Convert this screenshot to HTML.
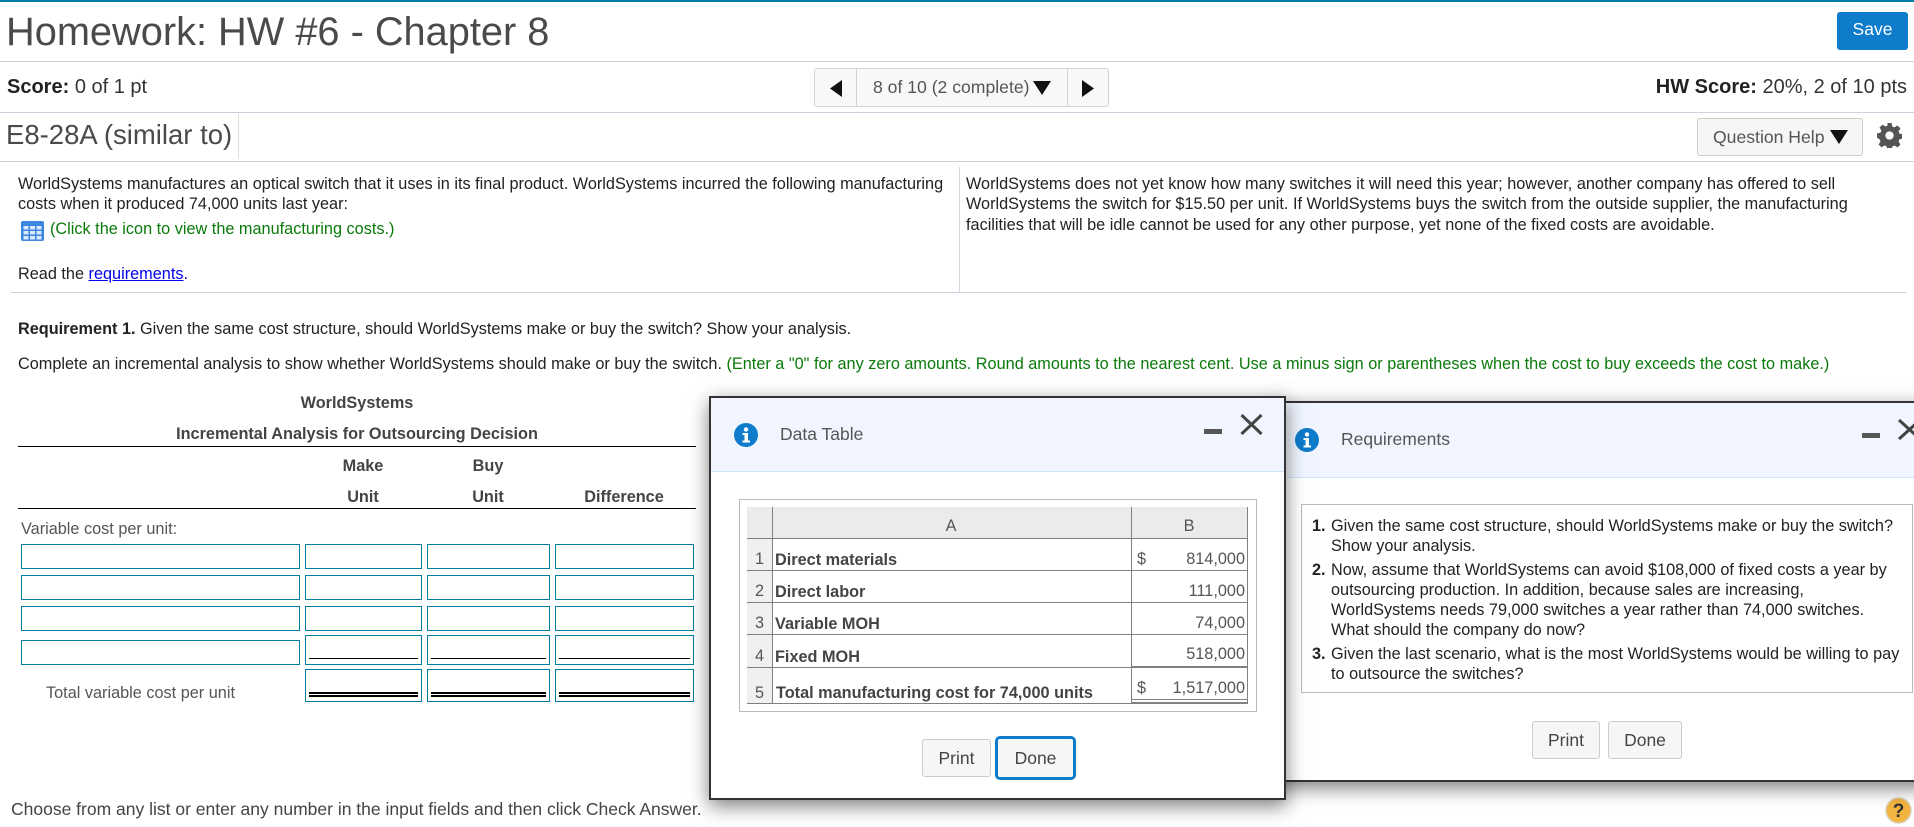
<!DOCTYPE html>
<html lang="en"><head><meta charset="utf-8"><title>Homework: HW #6 - Chapter 8</title>
<style>
html,body{margin:0;padding:0;background:#fff}
body{width:1914px;height:827px;overflow:hidden;position:relative;font-family:"Liberation Sans",Arial,sans-serif;color:#222}
.a{position:absolute;white-space:nowrap}
.t{position:absolute;white-space:nowrap;font-size:16.27px;line-height:20px;height:20px}
.c{transform:translateX(-50%)}
.hl{position:absolute;height:1px;background:#ccd0dc}
.in{position:absolute;box-sizing:border-box;border:1px solid #007fa3;background:#fff}
.ul{position:absolute;left:3px;right:3px;height:1px;background:#000}
.th{font-weight:bold;color:#444}
.btn{position:absolute;box-sizing:border-box;border:1px solid #ccc;border-radius:3px;background:#f6f6f6;color:#444;text-align:center;font-size:17.5px}
.dlg{position:absolute;box-sizing:border-box;border:2px solid #333;background:#fff;box-shadow:0 6px 18px rgba(0,0,0,.5)}
.g{position:absolute;background:#808080}
.num{color:#555}
.bd{font-weight:bold;color:#444}
</style></head><body>
<div class="a" style="left:0;top:0;width:1914px;height:2px;background:#007fa3"></div>
<div class="a" style="left:6px;top:9px;font-size:39.75px;line-height:46px;color:#4a4a4a">Homework: HW #6 - Chapter 8</div>
<div class="btn" style="left:1837px;top:12px;width:71px;height:38px;background:#0f7bcb;border-color:#0f7bcb;color:#fff;line-height:33px">Save</div>
<div class="hl" style="left:0;top:61px;width:1914px"></div>
<div class="a" style="left:7px;top:76px;font-size:20px;line-height:22px;color:#222"><b>Score:</b> <span style="color:#333">0 of 1 pt</span></div>
<div class="a" style="left:814px;top:68px;width:295px;height:39px;box-sizing:border-box;border:1px solid #d4d4d4;border-radius:3px;background:#f8f8f8"></div>
<div class="a" style="left:856px;top:68px;width:1px;height:39px;background:#d4d4d4"></div>
<div class="a" style="left:1067px;top:68px;width:1px;height:39px;background:#d4d4d4"></div>
<svg class="a" style="left:830px;top:80px" width="12" height="17"><path d="M12 0V17L0 8.500Z" fill="#111"/></svg>
<svg class="a" style="left:1081px;top:80px" width="13" height="17"><path d="M1 0V17L13 8.500Z" fill="#111"/></svg>
<div class="a" style="left:873px;top:76px;font-size:17.6px;line-height:22px;color:#555">8 of 10 (2 complete)</div>
<svg class="a" style="left:1033px;top:81px" width="18" height="14"><path d="M0 0H18L9 14Z" fill="#111"/></svg>
<div class="a" style="right:7px;top:76px;font-size:20px;line-height:22px;color:#222"><b>HW Score:</b> <span style="color:#333">20%, 2 of 10 pts</span></div>
<div class="hl" style="left:0;top:112px;width:1914px"></div>
<div class="a" style="left:6px;top:118px;font-size:27.5px;line-height:34px;color:#4a4a4a">E8-28A (similar to)</div>
<div class="a" style="left:238px;top:114px;width:1px;height:45px;background:#ddd"></div>
<div class="btn" style="left:1697px;top:118px;width:166px;height:38px;line-height:36px;text-align:left;padding-left:15px;font-size:17.6px;color:#555">Question Help</div>
<svg class="a" style="left:1830px;top:130px" width="18" height="14"><path d="M0 0H18L9 14Z" fill="#111"/></svg>
<svg class="a" style="left:1877px;top:123px" width="25" height="25" viewBox="0 0 24 24"><path fill="#555" fill-rule="evenodd" d="M10 0h4l.7 3.300 2.100.9 2.900-1.800 2.800 2.800-1.800 2.900.9 2.100 3.400.7v4l-3.400.7-.9 2.100 1.800 2.900-2.800 2.800-2.900-1.800-2.100.9-.7 3.400h-4l-.7-3.400-2.100-.9-2.900 1.800-2.800-2.800 1.800-2.900-.9-2.100L0 14v-4l3.300-.7.9-2.100-1.800-2.900 2.800-2.800 2.900 1.800 2.100-.9zM12 8a4 4 0 1 0 0 8 4 4 0 0 0 0-8z"/></svg>
<div class="hl" style="left:0;top:161px;width:1914px"></div>

<div class="t" style="left:18px;top:174px">WorldSystems manufactures an optical switch that it uses in its final product. WorldSystems incurred the following manufacturing</div>
<div class="t" style="left:18px;top:194px">costs when it produced 74,000 units last year:</div>
<svg class="a" style="left:21px;top:221px" width="23" height="20"><rect width="23" height="20" rx="2" fill="#3a86e0"/><g fill="#dbe9fb"><rect x="2.500" y="5" width="5" height="3.500"/><rect x="9" y="5" width="5" height="3.500"/><rect x="15.500" y="5" width="5" height="3.500"/><rect x="2.500" y="10" width="5" height="3.500"/><rect x="9" y="10" width="5" height="3.500"/><rect x="15.500" y="10" width="5" height="3.500"/><rect x="2.500" y="15" width="5" height="3.500"/><rect x="9" y="15" width="5" height="3.500"/><rect x="15.500" y="15" width="5" height="3.500"/></g></svg>
<div class="t" style="left:50px;top:219px;color:#0a7a0a">(Click the icon to view the manufacturing costs.)</div>
<div class="t" style="left:18px;top:264px">Read the <span style="color:#00e;text-decoration:underline">requirements</span><span style="color:#00e">.</span></div>
<div class="a" style="left:959px;top:167px;width:1px;height:125px;background:#d5d8e0"></div>
<div class="t" style="left:966px;top:174px">WorldSystems does not yet know how many switches it will need this year; however, another company has offered to sell</div>
<div class="t" style="left:966px;top:194px">WorldSystems the switch for $15.50 per unit. If WorldSystems buys the switch from the outside supplier, the manufacturing</div>
<div class="t" style="left:966px;top:215px">facilities that will be idle cannot be used for any other purpose, yet none of the fixed costs are avoidable.</div>
<div class="hl" style="left:11px;top:292px;width:1895px"></div>

<div class="t" style="left:18px;top:319px"><b>Requirement 1.</b> Given the same cost structure, should WorldSystems make or buy the switch? Show your analysis.</div>
<div class="t" style="left:18px;top:354px">Complete an incremental analysis to show whether WorldSystems should make or buy the switch. <span style="color:#0a7a0a">(Enter a "0" for any zero amounts. Round amounts to the nearest cent. Use a minus sign or parentheses when the cost to buy exceeds the cost to make.)</span></div>

<div class="t c th" style="left:357px;top:393px">WorldSystems</div>
<div class="t c th" style="left:357px;top:424px">Incremental Analysis for Outsourcing Decision</div>
<div class="a" style="left:18px;top:446px;width:678px;height:1px;background:#000"></div>
<div class="t c th" style="left:363px;top:456px">Make</div>
<div class="t c th" style="left:488px;top:456px">Buy</div>
<div class="t c th" style="left:363px;top:487px">Unit</div>
<div class="t c th" style="left:488px;top:487px">Unit</div>
<div class="t c th" style="left:624px;top:487px">Difference</div>
<div class="a" style="left:18px;top:508px;width:678px;height:1px;background:#000"></div>
<div class="t" style="left:21px;top:519px;color:#555">Variable cost per unit:</div>

<div class="in" style="left:21px;top:544px;width:279px;height:25px"></div>
<div class="in" style="left:305px;top:544px;width:117px;height:25px"></div>
<div class="in" style="left:427px;top:544px;width:123px;height:25px"></div>
<div class="in" style="left:555px;top:544px;width:139px;height:25px"></div>
<div class="in" style="left:21px;top:575px;width:279px;height:25px"></div>
<div class="in" style="left:305px;top:575px;width:117px;height:25px"></div>
<div class="in" style="left:427px;top:575px;width:123px;height:25px"></div>
<div class="in" style="left:555px;top:575px;width:139px;height:25px"></div>
<div class="in" style="left:21px;top:606px;width:279px;height:25px"></div>
<div class="in" style="left:305px;top:606px;width:117px;height:25px"></div>
<div class="in" style="left:427px;top:606px;width:123px;height:25px"></div>
<div class="in" style="left:555px;top:606px;width:139px;height:25px"></div>
<div class="in" style="left:21px;top:640px;width:279px;height:25px"></div>
<div class="in" style="left:305px;top:635px;width:117px;height:30px"><div class="ul" style="top:22px"></div></div>
<div class="in" style="left:427px;top:635px;width:123px;height:30px"><div class="ul" style="top:22px"></div></div>
<div class="in" style="left:555px;top:635px;width:139px;height:30px"><div class="ul" style="top:22px"></div></div>
<div class="t" style="left:46px;top:683px;color:#555">Total variable cost per unit</div>
<div class="in" style="left:305px;top:669px;width:117px;height:33px"><div class="ul" style="top:22px;height:2px"></div><div class="ul" style="top:25px;height:2px"></div></div>
<div class="in" style="left:427px;top:669px;width:123px;height:33px"><div class="ul" style="top:22px;height:2px"></div><div class="ul" style="top:25px;height:2px"></div></div>
<div class="in" style="left:555px;top:669px;width:139px;height:33px"><div class="ul" style="top:22px;height:2px"></div><div class="ul" style="top:25px;height:2px"></div></div>
<div class="a" style="left:11px;top:799px;font-size:17.5px;line-height:20px;color:#444">Choose from any list or enter any number in the input fields and then click Check Answer.</div>
<svg class="a" style="left:1885px;top:797px" width="27" height="27"><circle cx="13.500" cy="13.500" r="12.500" fill="#f3b53f" stroke="#d9d2b8" stroke-width="1.500"/><text x="13.500" y="20" text-anchor="middle" font-family="Liberation Sans" font-weight="bold" font-size="19" fill="#333">?</text></svg>

<!-- Requirements dialog -->
<div class="dlg" style="left:1270px;top:401px;width:660px;height:381px"></div>
<div class="a" style="left:1287px;top:403px;width:627px;height:74px;background:#f0f5ff;border-bottom:1px solid #cfe5fa"></div>
<svg class="a" style="left:1295px;top:428px" width="24" height="24"><circle cx="12" cy="12" r="12" fill="#0f7bcb"/><circle cx="12" cy="6.500" r="2.200" fill="#fff"/><path d="M8.500 10H14V17.500H16V19.500H8.500V17.500H10.500V12H8.500Z" fill="#fff"/></svg>
<div class="a" style="left:1341px;top:429px;font-size:17.5px;line-height:20px;color:#555">Requirements</div>
<div class="a" style="left:1862px;top:433px;width:18px;height:5px;background:#555"></div>
<svg class="a" style="left:1898px;top:419px" width="16" height="21"><path d="M1 1L22 20M22 1L1 20" stroke="#444" stroke-width="3" fill="none"/></svg>
<div class="a" style="left:1301px;top:504px;width:612px;height:189px;box-sizing:border-box;border:1px solid #bbb;background:#fff"></div>
<div class="t" style="left:1312px;top:516px"><b>1.</b></div><div class="t" style="left:1331px;top:516px">Given the same cost structure, should WorldSystems make or buy the switch?</div>
<div class="t" style="left:1331px;top:536px">Show your analysis.</div>
<div class="t" style="left:1312px;top:560px"><b>2.</b></div><div class="t" style="left:1331px;top:560px">Now, assume that WorldSystems can avoid $108,000 of fixed costs a year by</div>
<div class="t" style="left:1331px;top:580px">outsourcing production. In addition, because sales are increasing,</div>
<div class="t" style="left:1331px;top:600px">WorldSystems needs 79,000 switches a year rather than 74,000 switches.</div>
<div class="t" style="left:1331px;top:620px">What should the company do now?</div>
<div class="t" style="left:1312px;top:644px"><b>3.</b></div><div class="t" style="left:1331px;top:644px">Given the last scenario, what is the most WorldSystems would be willing to pay</div>
<div class="t" style="left:1331px;top:664px">to outsource the switches?</div>
<div class="btn" style="left:1532px;top:721px;width:68px;height:38px;line-height:36px">Print</div>
<div class="btn" style="left:1608px;top:721px;width:74px;height:38px;line-height:36px">Done</div>

<!-- Data Table dialog -->
<div class="dlg" style="left:709px;top:396px;width:577px;height:404px"></div>
<div class="a" style="left:711px;top:398px;width:573px;height:73px;background:#f0f5ff;border-bottom:1px solid #cfe5fa"></div>
<svg class="a" style="left:734px;top:423px" width="24" height="24"><circle cx="12" cy="12" r="12" fill="#0f7bcb"/><circle cx="12" cy="6.500" r="2.200" fill="#fff"/><path d="M8.500 10H14V17.500H16V19.500H8.500V17.500H10.500V12H8.500Z" fill="#fff"/></svg>
<div class="a" style="left:780px;top:424px;font-size:17.5px;line-height:20px;color:#555">Data Table</div>
<div class="a" style="left:1204px;top:429px;width:18px;height:5px;background:#555"></div>
<svg class="a" style="left:1240px;top:414px" width="23" height="21"><path d="M1.500 1L21.500 20M21.500 1L1.500 20" stroke="#444" stroke-width="3" fill="none"/></svg>

<div class="a" style="left:739px;top:499px;width:518px;height:213px;box-sizing:border-box;border:1px solid #bbb"></div>
<div class="a" style="left:747px;top:507px;width:501px;height:31px;background:#ebebeb"></div>
<div class="a" style="left:747px;top:538px;width:25px;height:165px;background:#f0f0f0"></div>
<div class="g" style="left:772px;top:507px;width:1px;height:196px"></div>
<div class="g" style="left:1131px;top:507px;width:1px;height:196px"></div>
<div class="g" style="left:1247px;top:507px;width:1px;height:196px"></div>
<div class="g" style="left:747px;top:538px;width:501px;height:1px"></div>
<div class="g" style="left:747px;top:570px;width:501px;height:1px"></div>
<div class="g" style="left:747px;top:602px;width:501px;height:1px"></div>
<div class="g" style="left:747px;top:634px;width:501px;height:1px"></div>
<div class="g" style="left:747px;top:667px;width:384px;height:1px"></div>
<div class="g" style="left:1131px;top:666px;width:117px;height:2px"></div>
<div class="g" style="left:747px;top:703px;width:384px;height:1px"></div>
<div class="g" style="left:1131px;top:699px;width:117px;height:1px"></div>
<div class="g" style="left:1131px;top:702px;width:117px;height:2px"></div>
<div class="t c num" style="left:951px;top:516px">A</div>
<div class="t c num" style="left:1189px;top:516px">B</div>
<div class="t num" style="left:755px;top:549px">1</div>
<div class="t num" style="left:755px;top:581px">2</div>
<div class="t num" style="left:755px;top:613px">3</div>
<div class="t num" style="left:755px;top:646px">4</div>
<div class="t num" style="left:755px;top:683px">5</div>
<div class="t bd" style="left:775px;top:550px">Direct materials</div>
<div class="t bd" style="left:775px;top:582px">Direct labor</div>
<div class="t bd" style="left:775px;top:614px">Variable MOH</div>
<div class="t bd" style="left:775px;top:647px">Fixed MOH</div>
<div class="t bd" style="left:776px;top:683px">Total manufacturing cost for 74,000 units</div>
<div class="t num" style="left:1137px;top:549px">$</div>
<div class="t num" style="right:669px;top:549px">814,000</div>
<div class="t num" style="right:669px;top:581px">111,000</div>
<div class="t num" style="right:669px;top:613px">74,000</div>
<div class="t num" style="right:669px;top:644px">518,000</div>
<div class="t num" style="left:1137px;top:678px">$</div>
<div class="t num" style="right:669px;top:678px">1,517,000</div>
<div class="btn" style="left:922px;top:739px;width:69px;height:38px;line-height:36px">Print</div>
<div class="btn" style="left:995px;top:736px;width:81px;height:44px;border:3px solid #0f7bcb;border-radius:5px;line-height:38px">Done</div>
</body></html>
